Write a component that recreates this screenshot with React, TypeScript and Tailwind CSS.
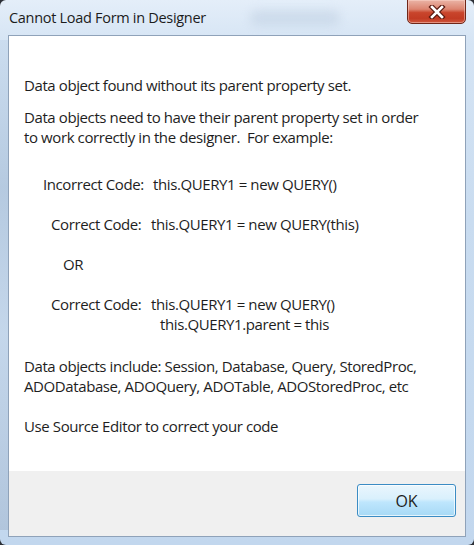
import React from "react";

const font = { fontFamily: '"Open Sans", "Noto Sans", sans-serif' };

function CloseGlyph() {
  return (
    <svg width="18" height="14" viewBox="0 0 18 14">
      <g strokeLinecap="square">
        <path d="M4 2 L14 12 M14 2 L4 12" stroke="#5a1a10" strokeWidth="5" />
        <path d="M4 2 L14 12 M14 2 L4 12" stroke="#ffffff" strokeWidth="2.6" />
      </g>
    </svg>
  );
}

export default function App() {
  return (
    <div className="w-[474px] h-[545px] bg-[#2b2f36]" style={font}>
      <div className="relative w-[474px] h-[545px] rounded-[6px] overflow-hidden flex flex-col bg-[linear-gradient(180deg,#e4eef9_0%,#d5e4f4_8%,#c9dcf0_40%,#c2d7ee_100%)]">
        {/* blurred glass hints */}
        <div className="absolute left-[250px] top-[10px] w-[90px] h-[16px] rounded-full bg-[#b7c8dc] opacity-40 blur-[5px]" />
        <div className="absolute left-[0px] top-[40px] w-[8px] h-[490px] bg-[linear-gradient(180deg,#c9dbee,#b0c5dc_30%,#c4d6ea_60%,#adc1d8)] opacity-80" />

        {/* title bar */}
        <div className="relative h-[35px] flex items-center pl-[9px] pt-[1px]">
          <span className="text-[14.5px] text-[#1c1c1c] tracking-[-0.3px]">Cannot Load Form in Designer</span>
        </div>

        {/* close button */}
        <div className="absolute top-[-1px] left-[407px] w-[59px] h-[25px] rounded-b-[5px] border border-[#6f2618] bg-[linear-gradient(180deg,#eab4a6_0%,#dc8470_40%,#c9452c_55%,#c23b24_80%,#d0573e_100%)] shadow-[inset_0_0_0_1px_rgba(255,220,210,0.45)] flex items-center justify-center">
          <CloseGlyph />
        </div>

        {/* client area */}
        <div className="relative mx-[8px] h-[502px] border border-[#8fa2b9] bg-white flex flex-col">
          <div className="flex-1 text-[15px] tracking-[-0.4px] leading-[20px] text-[#1e1e1e]">
            <div className="pl-[15px] mt-[39px]">Data object found without its parent property set.</div>
            <div className="pl-[15px] mt-[12px]">
              <div>Data objects need to have their parent property set in order</div>
              <div>to work correctly in the designer.&nbsp; For example:</div>
            </div>
            <div className="mt-[27px] pl-[34px] flex">
              <span className="w-[110px] shrink-0">Incorrect Code:</span>
              <span>this.QUERY1 = new QUERY()</span>
            </div>
            <div className="mt-[20px] pl-[42px] flex">
              <span className="w-[100px] shrink-0">Correct Code:</span>
              <span>this.QUERY1 = new QUERY(this)</span>
            </div>
            <div className="mt-[20px] pl-[54px]">OR</div>
            <div className="mt-[20px] pl-[42px]">
              <div className="flex">
                <span className="w-[100px] shrink-0">Correct Code:</span>
                <span>this.QUERY1 = new QUERY()</span>
              </div>
              <div className="pl-[109px]">this.QUERY1.parent = this</div>
            </div>
            <div className="pl-[15px] mt-[22px]">
              <div>Data objects include: Session, Database, Query, StoredProc,</div>
              <div>ADODatabase, ADOQuery, ADOTable, ADOStoredProc, etc</div>
            </div>
            <div className="pl-[15px] mt-[20px]">Use Source Editor to correct your code</div>
          </div>
          <div className="h-[65px] bg-[#f0f0f0] flex justify-end items-start pt-[13px] pr-[9px]">
            <button className="w-[99px] h-[33px] rounded-[3px] border border-[#3b8cc4] bg-[linear-gradient(180deg,#eaf6fd_0%,#d9f0fc_45%,#bee6fd_55%,#a7d9f5_100%)] shadow-[inset_0_0_0_1px_rgba(255,255,255,0.7)] text-[16px] text-[#1e1e1e] flex items-center justify-center">
              OK
            </button>
          </div>
        </div>
      </div>
    </div>
  );
}
